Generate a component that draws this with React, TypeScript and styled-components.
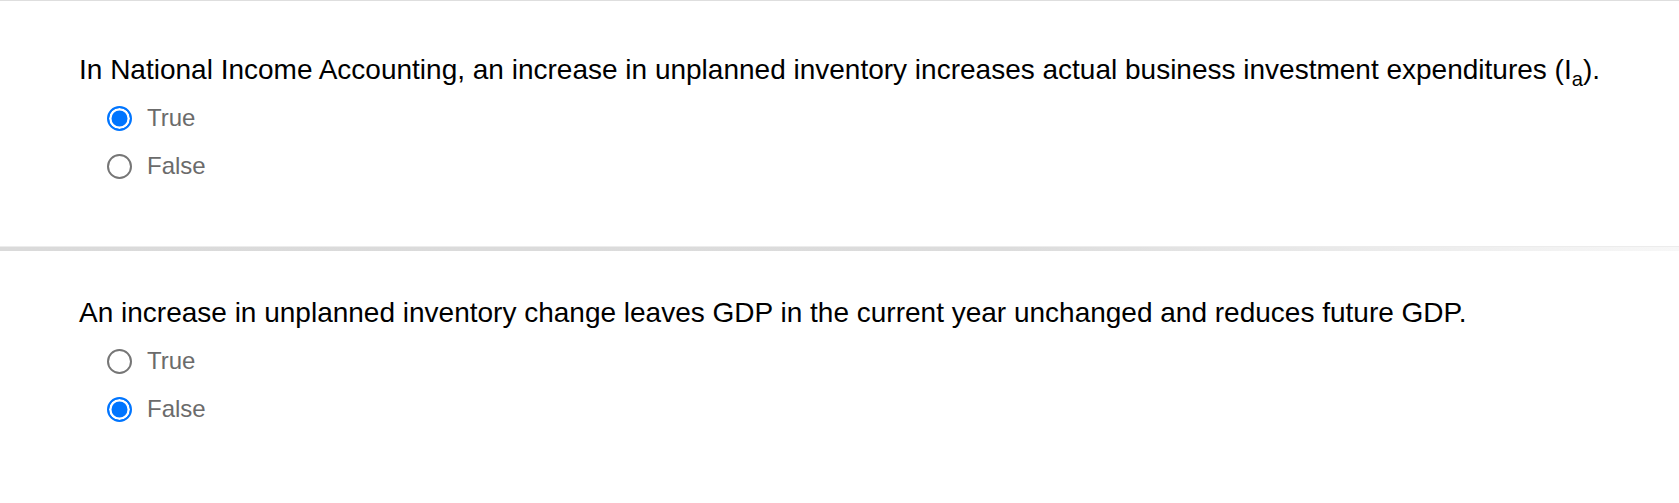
import React from 'react';
import styled, { createGlobalStyle } from 'styled-components';

const GlobalStyle = createGlobalStyle`
    html, body {
        margin: 0;
        padding: 0;
        background: #fff;
    }
    body {
        font-family: "Liberation Sans", Arial, sans-serif;
    }
`;

const Page = styled.div`
    border-top: 1px solid #dedede;
`;

const Section = styled.section<{ top: number; bottom: number }>`
    padding: ${props => props.top}px 40px ${props => props.bottom}px 79px;
`;

const Divider = styled.div`
    height: 5px;
    border-top: 1px solid #ececec;
    box-sizing: border-box;
    background: linear-gradient(to right, #dadada 0%, #dcdcdc 60%, #f7f7f7 100%);
`;

const Question = styled.p`
    margin: 0;
    font-size: 28px;
    line-height: 36px;
    color: #000;

    sub {
        font-size: 0.72em;
        vertical-align: -0.36em;
        line-height: 0;
    }
`;

const Options = styled.div`
    display: flex;
    flex-direction: column;
    margin-top: 6px;
    padding-left: 28px;
`;

const Option = styled.label`
    display: flex;
    align-items: center;
    gap: 15px;
    height: 48px;
    font-size: 24px;
    color: #6b6b6b;
    cursor: pointer;
`;

const Radio = styled.input`
    appearance: none;
    box-sizing: border-box;
    flex: none;
    width: 25px;
    height: 25px;
    margin: 0;
    border-radius: 50%;
    border: 2px solid #767676;
    background: #fff;

    &:checked {
        border: 2.5px solid #0075ff;
        box-shadow: inset 0 0 0 2.5px #fff;
        background: #0075ff;
    }
`;

type Item = {
    id: string;
    text: React.ReactNode;
    answer: 'True' | 'False';
};

const items: Item[] = [
    {
        id: 'q1',
        text: (
            <>
                In National Income Accounting, an increase in unplanned inventory increases actual business investment
                expenditures (I<sub>a</sub>).
            </>
        ),
        answer: 'True',
    },
    {
        id: 'q2',
        text: 'An increase in unplanned inventory change leaves GDP in the current year unchanged and reduces future GDP.',
        answer: 'False',
    },
];

function App() {
    return (
        <Page>
            <GlobalStyle />
            {items.map((item, i) => (
                <React.Fragment key={item.id}>
                    {i > 0 && <Divider />}
                    <Section top={i === 0 ? 51 : 44} bottom={i === 0 ? 56 : 60}>
                        <Question>{item.text}</Question>
                        <Options>
                            {['True', 'False'].map(choice => (
                                <Option key={choice}>
                                    <Radio type="radio" name={item.id} defaultChecked={choice === item.answer} />
                                    {choice}
                                </Option>
                            ))}
                        </Options>
                    </Section>
                </React.Fragment>
            ))}
        </Page>
    );
}

export default App;
